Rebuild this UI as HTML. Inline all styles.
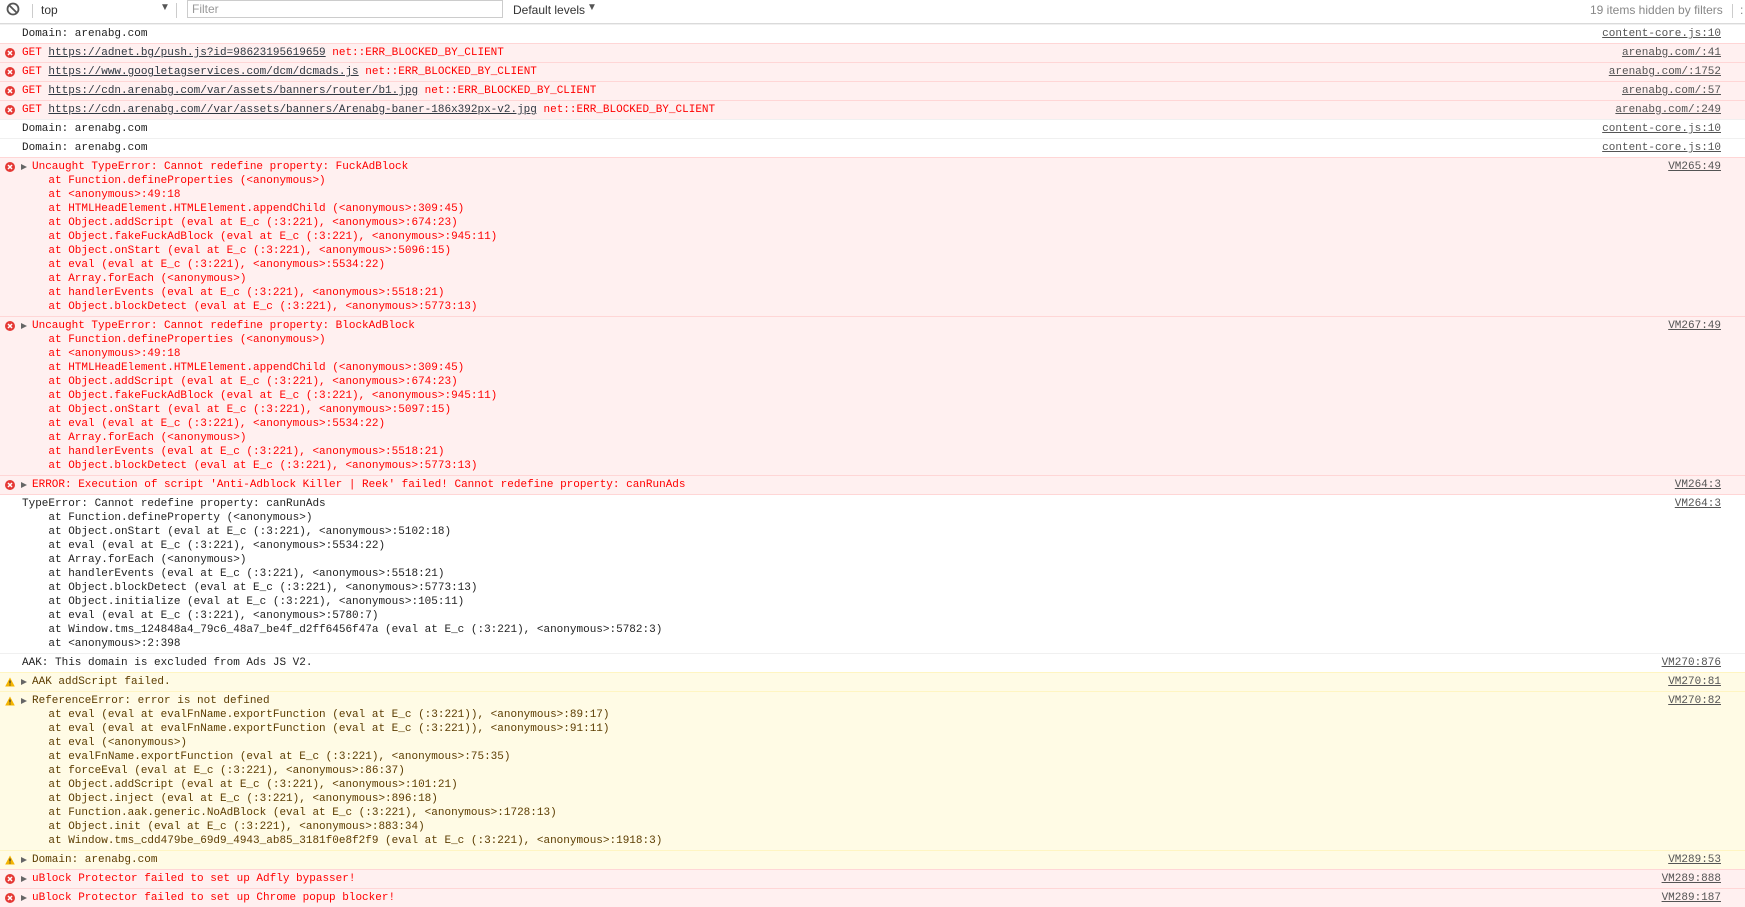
<!DOCTYPE html>
<html><head><meta charset="utf-8"><style>
*{margin:0;padding:0;box-sizing:border-box}
body{width:1745px;height:894px;overflow:hidden;background:#fff;position:relative;font-family:"Liberation Mono",monospace;font-size:11px}
.tb{position:absolute;left:0;top:0;width:1745px;height:24px;border-bottom:1px solid #dadada;background:#fff;font-family:"Liberation Sans",sans-serif;font-size:12px;color:#333}
.tb .a{position:absolute}
.row{position:relative;border-top:1px solid #f0f0f0;padding:2px 0;line-height:14px;white-space:pre;color:#222}
.row .m{padding-left:22px}
.row.t .m{padding-left:32px}
.row.t .m .s{display:block;margin-left:-10px}
.err{background:#fff0f0;border-top-color:#ffd6d6;color:#f00}
.wrn{background:#fffbe5;border-top-color:#fff5c2;color:#5c3c00}
.src{position:absolute;right:24px;top:2px;color:#545454;text-decoration:underline}
.ic{position:absolute;left:5px;top:4px;width:10px;height:10px}
.tri{position:absolute;left:21px;top:6px;width:0;height:0;border-left:6px solid #666;border-top:3.5px solid transparent;border-bottom:3.5px solid transparent}
u{color:#222;text-decoration:underline}
.err u{color:#303942}
</style></head><body>
<div class="tb">
<svg class="a" style="left:6px;top:2px" width="14" height="14" viewBox="0 0 14 14"><circle cx="7" cy="7" r="5.5" fill="none" stroke="#555" stroke-width="1.8"/><line x1="3.2" y1="3.2" x2="10.8" y2="10.8" stroke="#555" stroke-width="1.8"/></svg>
<div class="a" style="left:32px;top:4px;width:1px;height:14px;background:#ccc"></div>
<div class="a" style="left:41px;top:3px">top</div>
<div class="a" style="left:160px;top:2px;font-size:10px;color:#555">▼</div>
<div class="a" style="left:176px;top:3px;width:1px;height:15px;background:#ccc"></div>
<div class="a" style="left:187px;top:0;width:316px;height:18px;border:1px solid #ccc;color:#999;padding:0 0 0 4px;line-height:16px">Filter</div>
<div class="a" style="left:513px;top:3px">Default levels</div>
<div class="a" style="left:587px;top:2px;font-size:10px;color:#555">▼</div>
<div class="a" style="left:1590px;top:3px;color:#888">19 items hidden by filters</div>
<div class="a" style="left:1732px;top:4px;width:1px;height:14px;background:#ccc"></div>
<div class="a" style="left:1740px;top:3px;color:#888">:</div>
</div>
<div style="position:absolute;left:0;top:24px;width:1745px">
<div class="row"><div class="m">Domain: arenabg.com</div><span class="src">content-core.js:10</span></div>
<div class="row err"><svg class="ic" viewBox="0 0 10 10"><circle cx="5" cy="5" r="5" fill="#e53935"/><path d="M3 3L7 7M7 3L3 7" stroke="#fff" stroke-width="1.5"/></svg><div class="m">GET <u>https://adnet.bg/push.js?id=98623195619659</u> net::ERR_BLOCKED_BY_CLIENT</div><span class="src">arenabg.com/:41</span></div>
<div class="row err"><svg class="ic" viewBox="0 0 10 10"><circle cx="5" cy="5" r="5" fill="#e53935"/><path d="M3 3L7 7M7 3L3 7" stroke="#fff" stroke-width="1.5"/></svg><div class="m">GET <u>https://www.googletagservices.com/dcm/dcmads.js</u> net::ERR_BLOCKED_BY_CLIENT</div><span class="src">arenabg.com/:1752</span></div>
<div class="row err"><svg class="ic" viewBox="0 0 10 10"><circle cx="5" cy="5" r="5" fill="#e53935"/><path d="M3 3L7 7M7 3L3 7" stroke="#fff" stroke-width="1.5"/></svg><div class="m">GET <u>https://cdn.arenabg.com/var/assets/banners/router/b1.jpg</u> net::ERR_BLOCKED_BY_CLIENT</div><span class="src">arenabg.com/:57</span></div>
<div class="row err"><svg class="ic" viewBox="0 0 10 10"><circle cx="5" cy="5" r="5" fill="#e53935"/><path d="M3 3L7 7M7 3L3 7" stroke="#fff" stroke-width="1.5"/></svg><div class="m">GET <u>https://cdn.arenabg.com//var/assets/banners/Arenabg-baner-186x392px-v2.jpg</u> net::ERR_BLOCKED_BY_CLIENT</div><span class="src">arenabg.com/:249</span></div>
<div class="row"><div class="m">Domain: arenabg.com</div><span class="src">content-core.js:10</span></div>
<div class="row"><div class="m">Domain: arenabg.com</div><span class="src">content-core.js:10</span></div>
<div class="row err t"><svg class="ic" viewBox="0 0 10 10"><circle cx="5" cy="5" r="5" fill="#e53935"/><path d="M3 3L7 7M7 3L3 7" stroke="#fff" stroke-width="1.5"/></svg><span class="tri"></span><div class="m">Uncaught TypeError: Cannot redefine property: FuckAdBlock<span class="s">    at Function.defineProperties (&lt;anonymous&gt;)
    at &lt;anonymous&gt;:49:18
    at HTMLHeadElement.HTMLElement.appendChild (&lt;anonymous&gt;:309:45)
    at Object.addScript (eval at E_c (:3:221), &lt;anonymous&gt;:674:23)
    at Object.fakeFuckAdBlock (eval at E_c (:3:221), &lt;anonymous&gt;:945:11)
    at Object.onStart (eval at E_c (:3:221), &lt;anonymous&gt;:5096:15)
    at eval (eval at E_c (:3:221), &lt;anonymous&gt;:5534:22)
    at Array.forEach (&lt;anonymous&gt;)
    at handlerEvents (eval at E_c (:3:221), &lt;anonymous&gt;:5518:21)
    at Object.blockDetect (eval at E_c (:3:221), &lt;anonymous&gt;:5773:13)</span></div><span class="src">VM265:49</span></div>
<div class="row err t"><svg class="ic" viewBox="0 0 10 10"><circle cx="5" cy="5" r="5" fill="#e53935"/><path d="M3 3L7 7M7 3L3 7" stroke="#fff" stroke-width="1.5"/></svg><span class="tri"></span><div class="m">Uncaught TypeError: Cannot redefine property: BlockAdBlock<span class="s">    at Function.defineProperties (&lt;anonymous&gt;)
    at &lt;anonymous&gt;:49:18
    at HTMLHeadElement.HTMLElement.appendChild (&lt;anonymous&gt;:309:45)
    at Object.addScript (eval at E_c (:3:221), &lt;anonymous&gt;:674:23)
    at Object.fakeFuckAdBlock (eval at E_c (:3:221), &lt;anonymous&gt;:945:11)
    at Object.onStart (eval at E_c (:3:221), &lt;anonymous&gt;:5097:15)
    at eval (eval at E_c (:3:221), &lt;anonymous&gt;:5534:22)
    at Array.forEach (&lt;anonymous&gt;)
    at handlerEvents (eval at E_c (:3:221), &lt;anonymous&gt;:5518:21)
    at Object.blockDetect (eval at E_c (:3:221), &lt;anonymous&gt;:5773:13)</span></div><span class="src">VM267:49</span></div>
<div class="row err t"><svg class="ic" viewBox="0 0 10 10"><circle cx="5" cy="5" r="5" fill="#e53935"/><path d="M3 3L7 7M7 3L3 7" stroke="#fff" stroke-width="1.5"/></svg><span class="tri"></span><div class="m">ERROR: Execution of script 'Anti-Adblock Killer | Reek' failed! Cannot redefine property: canRunAds</div><span class="src">VM264:3</span></div>
<div class="row" style="border-top-color:#ffd6d6"><div class="m">TypeError: Cannot redefine property: canRunAds
    at Function.defineProperty (&lt;anonymous&gt;)
    at Object.onStart (eval at E_c (:3:221), &lt;anonymous&gt;:5102:18)
    at eval (eval at E_c (:3:221), &lt;anonymous&gt;:5534:22)
    at Array.forEach (&lt;anonymous&gt;)
    at handlerEvents (eval at E_c (:3:221), &lt;anonymous&gt;:5518:21)
    at Object.blockDetect (eval at E_c (:3:221), &lt;anonymous&gt;:5773:13)
    at Object.initialize (eval at E_c (:3:221), &lt;anonymous&gt;:105:11)
    at eval (eval at E_c (:3:221), &lt;anonymous&gt;:5780:7)
    at Window.tms_124848a4_79c6_48a7_be4f_d2ff6456f47a (eval at E_c (:3:221), &lt;anonymous&gt;:5782:3)
    at &lt;anonymous&gt;:2:398</div><span class="src">VM264:3</span></div>
<div class="row"><div class="m">AAK: This domain is excluded from Ads JS V2.</div><span class="src">VM270:876</span></div>
<div class="row wrn t"><svg class="ic" viewBox="0 0 10 10"><path d="M5 0.5L9.8 9.5H0.2Z" fill="#f4b400"/><path d="M5 3.5V6.5M5 7.5V8.5" stroke="#333" stroke-width="1.2"/></svg><span class="tri"></span><div class="m">AAK addScript failed.</div><span class="src">VM270:81</span></div>
<div class="row wrn t"><svg class="ic" viewBox="0 0 10 10"><path d="M5 0.5L9.8 9.5H0.2Z" fill="#f4b400"/><path d="M5 3.5V6.5M5 7.5V8.5" stroke="#333" stroke-width="1.2"/></svg><span class="tri"></span><div class="m">ReferenceError: error is not defined<span class="s">    at eval (eval at evalFnName.exportFunction (eval at E_c (:3:221)), &lt;anonymous&gt;:89:17)
    at eval (eval at evalFnName.exportFunction (eval at E_c (:3:221)), &lt;anonymous&gt;:91:11)
    at eval (&lt;anonymous&gt;)
    at evalFnName.exportFunction (eval at E_c (:3:221), &lt;anonymous&gt;:75:35)
    at forceEval (eval at E_c (:3:221), &lt;anonymous&gt;:86:37)
    at Object.addScript (eval at E_c (:3:221), &lt;anonymous&gt;:101:21)
    at Object.inject (eval at E_c (:3:221), &lt;anonymous&gt;:896:18)
    at Function.aak.generic.NoAdBlock (eval at E_c (:3:221), &lt;anonymous&gt;:1728:13)
    at Object.init (eval at E_c (:3:221), &lt;anonymous&gt;:883:34)
    at Window.tms_cdd479be_69d9_4943_ab85_3181f0e8f2f9 (eval at E_c (:3:221), &lt;anonymous&gt;:1918:3)</span></div><span class="src">VM270:82</span></div>
<div class="row wrn t"><svg class="ic" viewBox="0 0 10 10"><path d="M5 0.5L9.8 9.5H0.2Z" fill="#f4b400"/><path d="M5 3.5V6.5M5 7.5V8.5" stroke="#333" stroke-width="1.2"/></svg><span class="tri"></span><div class="m">Domain: arenabg.com</div><span class="src">VM289:53</span></div>
<div class="row err t"><svg class="ic" viewBox="0 0 10 10"><circle cx="5" cy="5" r="5" fill="#e53935"/><path d="M3 3L7 7M7 3L3 7" stroke="#fff" stroke-width="1.5"/></svg><span class="tri"></span><div class="m">uBlock Protector failed to set up Adfly bypasser!</div><span class="src">VM289:888</span></div>
<div class="row err t"><svg class="ic" viewBox="0 0 10 10"><circle cx="5" cy="5" r="5" fill="#e53935"/><path d="M3 3L7 7M7 3L3 7" stroke="#fff" stroke-width="1.5"/></svg><span class="tri"></span><div class="m">uBlock Protector failed to set up Chrome popup blocker!</div><span class="src">VM289:187</span></div>
</div>
</body></html>
